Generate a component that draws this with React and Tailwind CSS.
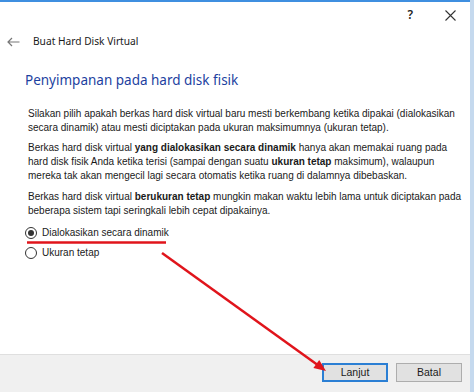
import React from "react";

const body = { fontFamily: '"Liberation Sans", Arial, sans-serif' };
const ui = { fontFamily: '"Noto Sans", "Open Sans", sans-serif' };

const Radio = ({ checked, label }) => (
  <label className="flex h-[16px] items-center gap-[5px]">
    <span className="grid h-[12px] w-[12px] place-items-center rounded-full border border-[#333333] bg-white">
      {checked && <span className="h-[6px] w-[6px] rounded-full bg-[#333333]" />}
    </span>
    <span className="text-[10px] leading-[16px] text-[#1a1a1a]" style={body}>
      {label}
    </span>
  </label>
);

const App = () => {
  return (
    <div className="relative flex h-[392px] w-[474px] overflow-hidden bg-[#c5d9ee]">
      <div className="flex w-[470px] flex-col border-t-2 border-[#3f8fe0] bg-white">
        {/* title bar */}
        <div className="flex h-[26px] items-center justify-end pr-[14px] text-[#222222]" style={ui}>
          <span className="mr-[32px] text-[12px] font-semibold">?</span>
          <svg width="11" height="11" viewBox="0 0 11 11">
            <path d="M0.5 0.5 L10.5 10.5 M10.5 0.5 L0.5 10.5" stroke="#333" strokeWidth="1.1" />
          </svg>
        </div>

        {/* header */}
        <div className="flex h-[28px] items-center gap-[13px] pl-[7px]">
          <svg width="13" height="10" viewBox="0 0 13 10">
            <path d="M12.5 5 H1 M5 1 L1 5 L5 9" stroke="#777" strokeWidth="1.2" fill="none" />
          </svg>
          <span className="text-[10.2px] text-[#1a1a1a]" style={ui}>
            Buat Hard Disk Virtual
          </span>
        </div>

        {/* heading */}
        <h1 className="mt-[14px] pl-[25px] text-[13.5px] leading-[20px] text-[#1d3f9f]" style={ui}>
          Penyimpanan pada hard disk fisik
        </h1>

        {/* body */}
        <div className="mt-[17px] pl-[28px] text-[10px] leading-[14px] whitespace-nowrap text-[#1a1a1a]" style={body}>
          <p>
            Silakan pilih apakah berkas hard disk virtual baru mesti berkembang ketika dipakai (dialokasikan
            <br />
            secara dinamik) atau mesti diciptakan pada ukuran maksimumnya (ukuran tetap).
          </p>
          <p className="mt-[6px]">
            Berkas hard disk virtual <b>yang dialokasikan secara dinamik</b> hanya akan memakai ruang pada
            <br />
            hard disk fisik Anda ketika terisi (sampai dengan suatu <b>ukuran tetap</b> maksimum), walaupun
            <br />
            mereka tak akan mengecil lagi secara otomatis ketika ruang di dalamnya dibebaskan.
          </p>
          <p className="mt-[7px]">
            Berkas hard disk virtual <b>berukuran tetap</b> mungkin makan waktu lebih lama untuk diciptakan pada
            <br />
            beberapa sistem tapi seringkali lebih cepat dipakainya.
          </p>
        </div>

        <div className="mt-[7px] flex flex-col gap-[4px] pl-[25px]">
          <Radio checked label="Dialokasikan secara dinamik" />
          <Radio label="Ukuran tetap" />
        </div>

        <div className="flex-1" />

        {/* footer */}
        <div className="flex h-[38px] justify-end gap-[8px] border-t border-[#dfdfdf] bg-[#f0f0f0] pt-[8px] pr-[8px]" style={body}>
          <button className="h-[19px] w-[66px] border-2 border-[#2b7fd4] bg-[#e1e1e1] text-[10.5px] text-[#1a1a1a]">
            Lanjut
          </button>
          <button className="h-[19px] w-[66px] border border-[#adadad] bg-[#e1e1e1] text-[10.5px] text-[#1a1a1a]">
            Batal
          </button>
        </div>
      </div>
      <div className="flex-1" />

      {/* annotations */}
      <svg className="pointer-events-none absolute left-0 top-0" width="474" height="392">
        <path d="M27 242.5 L166 242.5" stroke="#e0141b" strokeWidth="2.5" />
        <path d="M162 253 L317 364.5" stroke="#e0141b" strokeWidth="2.5" />
        <polygon points="326,371 313.4,368.1 319.2,360" fill="#e0141b" />
      </svg>
    </div>
  );
};

export default App;
